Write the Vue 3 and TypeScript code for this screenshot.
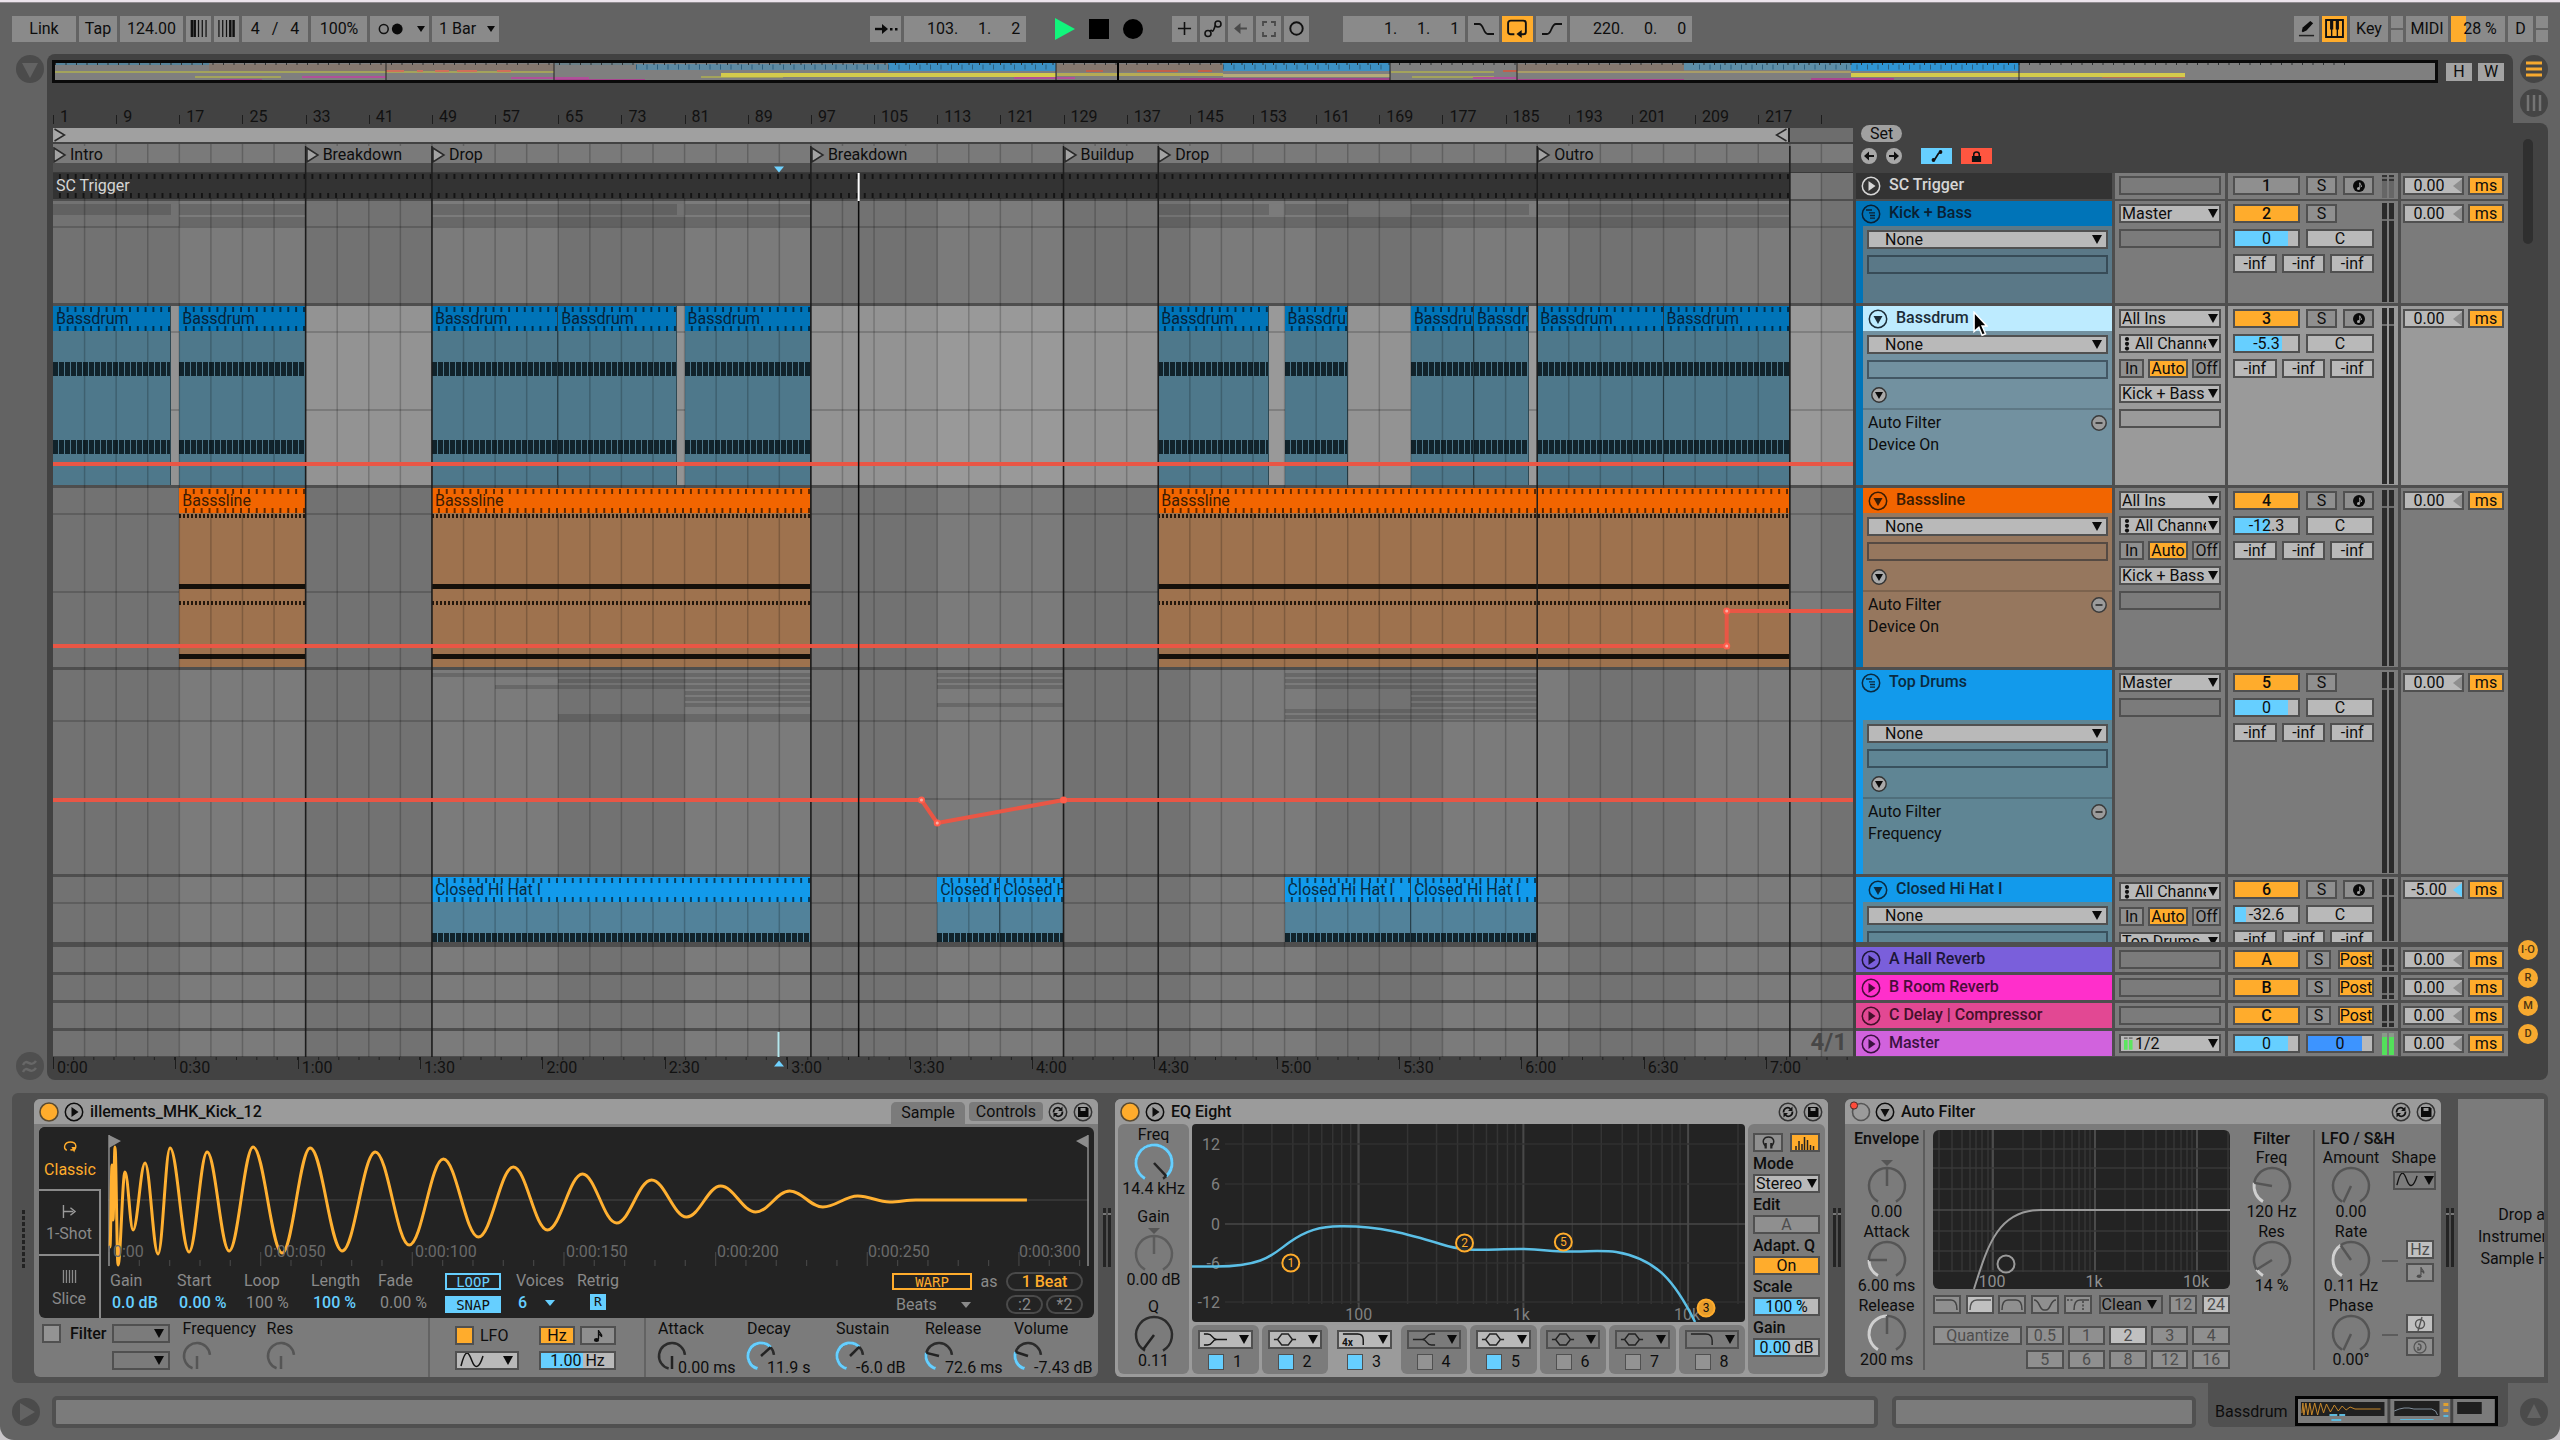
<script setup lang="ts">
import { h } from 'vue'

const BARS = 228
const pct = (bars: number): string => (bars / BARS) * 100 + '%'

/* ---------- icons ---------- */
const icons: Record<string, [string, string]> = {
  nudgeDown: ['0 0 18 18', '<path d="M2 0v18M5 0v18" stroke="#111" stroke-width="2.6"/><path d="M9 0v18M13 0v18M17 0v18" stroke="#111" stroke-width="1.3"/>'],
  nudgeUp: ['0 0 18 18', '<path d="M1 0v18M5 0v18M9 0v18" stroke="#111" stroke-width="1.3"/><path d="M13 0v18M16.5 0v18" stroke="#111" stroke-width="2.6"/>'],
  metro: ['0 0 26 12', '<circle cx="6" cy="6" r="4.6" fill="none" stroke="#111" stroke-width="1.6"/><circle cx="20" cy="6" r="5.6" fill="#0a0a0a"/>'],
  follow: ['0 0 24 12', '<path d="M1 6h9" stroke="#0a0a0a" stroke-width="2.4"/><path d="M8 1l6 5-6 5z" fill="#0a0a0a"/><path d="M16 5h2.500v2.500h-2.500zM21 5h2.500v2.500h-2.500z" fill="#0a0a0a"/>'],
  play: ['0 0 20 22', '<path d="M0 0l20 11L0 22z" fill="#12f57c"/>'],
  stop: ['0 0 20 20', '<path d="M0 0h20v20H0z" fill="#000"/>'],
  rec: ['0 0 20 20', '<circle cx="10" cy="10" r="10" fill="#000"/>'],
  plus: ['0 0 16 16', '<path d="M8 1v14M1 8h14" stroke="#111" stroke-width="1.700"/>'],
  auto: ['0 0 18 18', '<circle cx="4" cy="13.500" r="3" fill="none" stroke="#111" stroke-width="1.600"/><circle cx="14" cy="4" r="3" fill="none" stroke="#111" stroke-width="1.600"/><path d="M6 11.500C8 8 8 14 10 9s1-3 2-3.500" fill="none" stroke="#111" stroke-width="1.600"/>'],
  back: ['0 0 14 12', '<path d="M14 6H5" stroke="#4a4a4a" stroke-width="2.200"/><path d="M7 0v12L0 6z" fill="#4a4a4a"/>'],
  frame: ['0 0 14 16', '<path d="M1 5V1h4M9 1h4v4M13 11v4H9M5 15H1v-4" fill="none" stroke="#4a4a4a" stroke-width="1.800"/>'],
  ring: ['0 0 14 14', '<circle cx="7" cy="7" r="5.800" fill="none" stroke="#111" stroke-width="1.800"/>'],
  punchIn: ['0 0 22 14', '<path d="M1 2h5c5 0 4 10 9 10h6" fill="none" stroke="#111" stroke-width="1.800"/>'],
  punchOut: ['0 0 22 14', '<path d="M1 12h5c5 0 4-10 9-10h6" fill="none" stroke="#111" stroke-width="1.800"/>'],
  loop: ['0 0 22 18', '<path d="M8 14.500H4.500q-2.500 0-2.500-2.500V4q0-2.500 2.500-2.500h12q2.500 0 2.500 2.500v8q0 2.500-2.500 2.500H14" fill="none" stroke="#111" stroke-width="1.800"/><path d="M15 10.500v7.500l-5-3.700z" fill="#111"/>'],
  pen: ['0 0 18 18', '<path d="M4 12l1-4 8-7 3 2.500-7 7.500-4 2z" fill="#0a0a0a"/><path d="M1 16.500h16" stroke="#222" stroke-width="1.600"/>'],
  keys: ['0 0 18 18', '<path d="M1 1h16v16H1z" fill="none" stroke="#111" stroke-width="1.800"/><path d="M6.300 1v16M11.700 1v16" stroke="#111" stroke-width="1.300"/><path d="M4.800 1h3v9h-3zM10.200 1h3v9h-3z" fill="#111"/>'],
  lock: ['0 0 12 12', '<path d="M1 5.500h10V12H1z" fill="#111"/><path d="M3 6V3.500q0-2.500 3-2.500t3 2.500V6" fill="none" stroke="#111" stroke-width="1.700"/>'],
  link: ['0 0 12 12', '<path d="M2 10.500C6 9 5 4 10 1.500" stroke="#111" stroke-width="1.800" fill="none"/><circle cx="2.500" cy="10" r="1.900" fill="#111"/><circle cx="9.500" cy="2" r="1.900" fill="#111"/>'],
  arrowL: ['0 0 16 16', '<circle cx="8" cy="8" r="8" fill="#a8a8a8"/><path d="M13 8H6" stroke="#111" stroke-width="2"/><path d="M8 3.500v9L3 8z" fill="#111"/>'],
  arrowR: ['0 0 16 16', '<circle cx="8" cy="8" r="8" fill="#a8a8a8"/><path d="M3 8h7" stroke="#111" stroke-width="2"/><path d="M8 3.500v9L13 8z" fill="#111"/>'],
  foldR: ['0 0 20 20', '<circle cx="10" cy="10" r="8.700" fill="none" stroke="currentColor" stroke-width="1.500"/><path d="M7.500 5v10l7-5z" fill="currentColor"/>'],
  foldD: ['0 0 20 20', '<circle cx="10" cy="10" r="8.700" fill="none" stroke="currentColor" stroke-width="1.500"/><path d="M5.500 7h9L10 15z" fill="currentColor"/>'],
  group: ['0 0 20 20', '<circle cx="10" cy="10" r="8.700" fill="none" stroke="currentColor" stroke-width="1.500"/><path d="M5 6h6M8 8.800h6M9 11.500h5M9 14.200h5" stroke="currentColor" stroke-width="1.300"/>'],
  lane: ['0 0 16 16', '<circle cx="8" cy="8" r="7.200" fill="#a9a9a9" stroke="#333" stroke-width="1.400"/><path d="M4 5h8l-4 7z" fill="#0a0a0a"/>'],
  minus: ['0 0 16 16', '<circle cx="8" cy="8" r="7.200" fill="#9b9b9b" stroke="#3a3a3a" stroke-width="1.500"/><path d="M4.500 8h7" stroke="#222" stroke-width="1.500"/>'],
  note: ['0 0 12 14', '<path d="M6.500 1v9M6.500 1c0 3 4 3 3 7M6.500 4c0 2 3 2 3 4" fill="none" stroke="currentColor" stroke-width="1.300"/><ellipse cx="4.500" cy="11" rx="2.600" ry="1.900" fill="currentColor"/>'],
  arm: ['0 0 12 12', '<circle cx="6" cy="6" r="6" fill="#0a0a0a"/><path d="M6.800 2.500v5.500M6.800 3c0 1.500 2 1.500 1.600 4" stroke="#a5a5a5" stroke-width="1" fill="none"/><circle cx="5.500" cy="8.500" r="1.500" fill="#a5a5a5"/>'],
  midi: ['0 0 6 14', '<circle cx="3" cy="2" r="2.100" fill="#111"/><circle cx="3" cy="6.800" r="2.100" fill="#111"/><circle cx="3" cy="11.600" r="2.100" fill="#111"/>'],
  level: ['0 0 10 14', '<path d="M0 3h4v11H0zM5.500 3h4v11h-4z" fill="#5ce660"/><path d="M0 0h4v2H0zM5.500 0h4v2h-4z" fill="#777"/>'],
  discR: ['0 0 28 28', '<circle cx="14" cy="14" r="14" fill="#4b4b4b"/><path d="M8 5v18l15-9z" fill="#636363"/>'],
  discD: ['0 0 28 28', '<circle cx="14" cy="14" r="14" fill="#4b4b4b"/><path d="M6 8h16l-8 15z" fill="#636363"/>'],
  discU: ['0 0 28 28', '<circle cx="14" cy="14" r="14" fill="#4b4b4b"/><path d="M7 20h14L14 6z" fill="#636363"/>'],
  discW: ['0 0 28 28', '<circle cx="14" cy="14" r="14" fill="#4f4f4f"/><path d="M7 13c4-8 7 4 13-4M7 20c4-8 7 4 13-4" fill="none" stroke="#676767" stroke-width="2.500"/>'],
  discA: ['0 0 28 28', '<circle cx="14" cy="14" r="14" fill="#454545"/><path d="M6 8h16M6 14h16M6 20h16" stroke="#f7a92f" stroke-width="3"/>'],
  discS: ['0 0 28 28', '<circle cx="14" cy="14" r="14" fill="#454545"/><path d="M8 6v16M14 6v16M20 6v16" stroke="#747474" stroke-width="2.500"/>'],
  on: ['0 0 20 20', '<circle cx="10" cy="10" r="9" fill="#ffac2c" stroke="#5a4a30" stroke-width="1.600"/>'],
  off: ['0 0 20 20', '<circle cx="11" cy="10" r="8.500" fill="none" stroke="#555" stroke-width="1.600"/><circle cx="4" cy="3.500" r="3.600" fill="#ff4b3a" stroke="#4a2a28"/>'],
  swap: ['0 0 20 20', '<circle cx="10" cy="10" r="8.700" fill="none" stroke="#333" stroke-width="1.500"/><path d="M5.500 10.500c0-5 5-6 7-3.500M14.500 9.500c0 5-5 6-7 3.500" fill="none" stroke="#111" stroke-width="1.700"/><path d="M14.500 4.500v4.500h-4.500zM5.500 15.500V11h4.500z" fill="#111"/>'],
  save: ['0 0 20 20', '<circle cx="10" cy="10" r="8.700" fill="none" stroke="#333" stroke-width="1.500"/><path d="M5 5h9l1.500 1.500V15H5z" fill="#0a0a0a"/><path d="M7.500 6h5v3h-5z" fill="#999"/>'],
  classic: ['0 0 16 14', '<path d="M4 10C0 8 1 1 8 1s7 7 3 8.500H8" fill="none" stroke="#ffac2c" stroke-width="1.500"/><path d="M9 6.500h5l-2 6z" fill="#ffac2c"/><path d="M8 9.500h5" stroke="#ffac2c"/>'],
  oneShot: ['0 0 16 14', '<path d="M1.500 0v14M2 7h10" stroke="#9a9a9a" stroke-width="1.500"/><path d="M9 3l5 4-5 4" fill="none" stroke="#9a9a9a" stroke-width="1.500"/>'],
  slice: ['0 0 16 14', '<path d="M1.500 0v14M4.700 0v14M8 0v14M11.200 0v14M14.500 0v14" stroke="#8a8a8a" stroke-width="1.400"/>'],
  sine: ['0 0 24 14', '<path d="M1 12C6-8 9-1 12 7s7 8 11-5" fill="none" stroke="#111" stroke-width="1.500"/>'],
  head: ['0 0 16 16', '<path d="M5 12C0 7 3 2 8 2s8 5 3 10" fill="none" stroke="#222" stroke-width="1.600"/><path d="M5 8.500v6M11 8.500v6" stroke="#222" stroke-width="2.400"/>'],
  spectrum: ['0 0 20 14', '<path d="M1 14v-4M4 14V5M7 14V8M9.500 14V1M12.500 14V4M15.500 14V9M18.500 14v-4" stroke="#222" stroke-width="1.500"/>'],
  shelfL: ['0 0 26 14', '<path d="M1 1h4q3 0 5 3t5 3h11M1 13h4q3 0 5-3t5-3" fill="none" stroke="#111" stroke-width="1.500"/>'],
  shelfH: ['0 0 26 14', '<path d="M25 1h-4q-3 0-5 3t-5 3H1M25 13h-4q-3 0-5-3t-5-3" fill="none" stroke="#222" stroke-width="1.500"/>'],
  bell: ['0 0 26 14', '<path d="M1 7h4l4.500-6h7L21 7h4M5 7l4.500 6h7L21 7" fill="none" stroke="#222" stroke-width="1.500"/>'],
  cut4: ['0 0 26 14', '<path d="M1 1h16q6 0 6 6v6" fill="none" stroke="#111" stroke-width="1.500"/><text x="0" y="14" font-size="11" font-family="Roboto, sans-serif" font-weight="700" fill="#111">4x</text>'],
  cut: ['0 0 26 14', '<path d="M1 1h16q7 0 7 7v5" fill="none" stroke="#222" stroke-width="1.500"/>'],
  fLow: ['0 0 24 13', '<path d="M1 2h15q6 0 6 10" fill="none" stroke="#444" stroke-width="1.500"/>'],
  fHigh: ['0 0 24 13', '<path d="M2 12q0-10 7-10h14" fill="none" stroke="#555" stroke-width="1.500"/>'],
  fBand: ['0 0 24 13', '<path d="M2 12q0-10 6-10h8q6 0 6 10" fill="none" stroke="#444" stroke-width="1.500"/>'],
  fNotch: ['0 0 24 13', '<path d="M1 2c6 0 5 10 10 10h2c5 0 4-10 10-10" fill="none" stroke="#444" stroke-width="1.500"/>'],
  fMorph: ['0 0 24 13', '<path d="M8 12q0-10 6-10h9" fill="none" stroke="#444" stroke-width="1.500"/><path d="M1 2h6M17 3v10" stroke="#444" stroke-width="1.500" stroke-dasharray="2 1.500"/>'],
  phi: ['0 0 14 14', '<circle cx="7" cy="7" r="4.500" fill="none" stroke="#555" stroke-width="1.400"/><path d="M9 0L5 14" stroke="#555" stroke-width="1.400"/>'],
  spin: ['0 0 14 14', '<circle cx="7" cy="7" r="6" fill="none" stroke="#555" stroke-width="1.300"/><path d="M5 4c4 0 4 6 0 6V7" fill="none" stroke="#555" stroke-width="1.400"/>'],
}
const Icon = (p: { n: string; w: number; t?: number }) => {
  const [vb, body] = icons[p.n]
  const [, , vw, vh] = vb.split(' ').map(Number)
  return h('svg', { viewBox: vb, width: p.w, height: p.t ?? Math.round((p.w * vh) / vw), innerHTML: body, 'aria-hidden': 'true', style: 'flex:none;display:block;overflow:visible' })
}
Icon.props = ['n', 'w', 't']

/* ---------- rotary knob: angles are degrees clockwise from the top ---------- */
const Knob = (p: { r: number; a: number; from?: number; to?: number; on?: string; ring?: string; hand?: string; tri?: boolean }) => {
  const r = p.r - 1
  const c = p.r
  const from = p.from ?? -150
  const to = p.to ?? 150
  const at = (deg: number, rad = r) => {
    const t = (deg * Math.PI) / 180
    return (c + rad * Math.sin(t)).toFixed(2) + ' ' + (c - rad * Math.cos(t)).toFixed(2)
  }
  const arc = (s: number, e: number) => `M${at(s)}A${r} ${r} 0 ${e - s > 180 ? 1 : 0} 1 ${at(e)}`
  const parts = [h('path', { d: arc(from, to), fill: 'none', stroke: p.ring ?? '#2b2b2b', 'stroke-width': 2.5 })]
  if (p.on && p.a > from) parts.push(h('path', { d: arc(from, p.a), fill: 'none', stroke: p.on, 'stroke-width': 3 }))
  parts.push(h('path', { d: `M${c} ${c}L${at(p.a)}`, stroke: p.hand ?? '#222', 'stroke-width': 2.5 }))
  if (p.tri) parts.push(h('path', { d: `M${c - 6} -7h12l-6 6z`, fill: '#555' }))
  return h('svg', { viewBox: `0 0 ${c * 2} ${c * 2}`, width: c * 2, height: c * 2, 'aria-hidden': 'true', style: 'flex:none;display:block;overflow:visible' }, parts)
}
Knob.props = ['r', 'a', 'from', 'to', 'on', 'ring', 'hand', 'tri']

/* ---------- arrangement ---------- */
const rulerBars = Array.from({ length: 29 }, (_, i) => 1 + i * 8)
const times = Array.from({ length: 15 }, (_, i) => `${Math.floor(i / 2)}:${i % 2 ? '30' : '00'}`)
const locators = [
  { bar: 1, name: 'Intro' }, { bar: 33, name: 'Breakdown' }, { bar: 49, name: 'Drop' }, { bar: 97, name: 'Breakdown' },
  { bar: 129, name: 'Buildup' }, { bar: 141, name: 'Drop' }, { bar: 189, name: 'Outro' },
]
const songLines = [33, 49, 97, 129, 141, 189, 221]
const gridLines = Array.from({ length: 56 }, (_, i) => (i + 1) * 4)

type Ghost = [number, number, number, number]
interface Track {
  id: string; name: string; kind: 'plain' | 'group' | 'track'; h: number; sep: number
  color: string; body?: string; ink: string; strip?: string; num: string
  lines: number[]; clips: [number, number][]; clipBody?: string; notes?: string; ghosts?: Ghost[]
  io: string[]; ioTop?: number; solo?: boolean; arm?: boolean; post?: boolean
  vol?: string; volFill?: number; auto?: string; tall?: boolean; delay: string; sel?: boolean; inactive?: boolean
}
const tracks: Track[] = [
  { id: 'sc', name: 'SC Trigger', kind: 'plain', h: 28, sep: 2, color: '#333333', ink: '#d6d6d6', num: '1', lines: [], clips: [[1, 221]], io: ['box'], solo: true, arm: true, delay: '0.00', inactive: true },
  {
    id: 'kb', name: 'Kick + Bass', kind: 'group', h: 105, sep: 3, color: '#0074b8', body: '#5a7887', ink: '#0a2033', strip: '#0074b8', num: '2', lines: [25], clips: [],
    ghosts: [[1, 16, 3, 11], [17, 33, 3, 11], [17, 33, 16, 9], [49, 80, 3, 11], [81, 97, 3, 11], [49, 97, 16, 9], [141, 155, 3, 11], [157, 165, 3, 11], [173, 188, 3, 11], [189, 221, 3, 11], [141, 221, 16, 9]],
    io: ['Master', 'box'], solo: true, vol: '0', volFill: 84, delay: '0.00',
  },
  {
    id: 'bd', name: 'Bassdrum', kind: 'track', h: 182, sep: 3, color: '#bdebff', body: '#7291a0', ink: '#1c2c38', strip: '#0074b8', num: '3', lines: [25, 103],
    clips: [[1, 16], [17, 33], [49, 65], [65, 80], [81, 97], [141, 155], [157, 165], [173, 181], [181, 188], [189, 205], [205, 221]], clipBody: '#4e788b', notes: 'kick',
    io: ['All Ins', 'chan', 'mon', 'Kick + Bass', 'box'], solo: true, arm: true, vol: '-5.3', volFill: 74, auto: 'Device On', delay: '0.00', sel: true,
  },
  {
    id: 'bl', name: 'Basssline', kind: 'track', h: 182, sep: 3, color: '#f26500', body: '#96775e', ink: '#3a1c05', strip: '#0074b8', num: '4', lines: [25, 103],
    clips: [[17, 33], [49, 97], [141, 221]], clipBody: '#9e724e', notes: 'bass',
    io: ['All Ins', 'chan', 'mon', 'Kick + Bass', 'box'], solo: true, arm: true, vol: '-12.3', volFill: 54, auto: 'Device On', delay: '0.00',
  },
  {
    id: 'td', name: 'Top Drums', kind: 'group', h: 207, sep: 3, color: '#129aeb', body: '#5f8594', ink: '#0a2a40', strip: '#129aeb', num: '5', lines: [50, 128], clips: [],
    ghosts: [
      [49, 97, 3, 4], [65, 97, 9, 4], [57, 97, 15, 4], [81, 97, 21, 4], [81, 97, 27, 4], [81, 97, 33, 4], [65, 97, 44, 6],
      [113, 129, 3, 4], [113, 129, 9, 4], [113, 129, 15, 4], [113, 129, 33, 4],
      [157, 189, 3, 4], [157, 189, 9, 4], [157, 189, 15, 4], [173, 189, 21, 4], [173, 189, 27, 4], [173, 189, 33, 4], [157, 189, 39, 4], [157, 189, 45, 4],
    ],
    io: ['Master', 'box'], solo: true, vol: '0', volFill: 84, auto: 'Frequency', tall: true, delay: '0.00',
  },
  {
    id: 'hh', name: 'Closed Hi Hat I', kind: 'track', h: 70, sep: 5, color: '#129aeb', body: '#5f8594', ink: '#0a2a40', strip: '#129aeb', num: '6', lines: [25],
    clips: [[49, 97], [113, 121], [121, 129], [157, 173], [173, 189]], clipBody: '#52829a', notes: 'hat',
    io: ['chan', 'mon', 'Top Drums'], ioTop: 5, solo: true, arm: true, vol: '-32.6', volFill: 18, delay: '-5.00',
  },
  { id: 'ra', name: 'A Hall Reverb', kind: 'plain', h: 28, sep: 3, color: '#7a5fdb', ink: '#1d1638', num: 'A', lines: [], clips: [], io: ['box'], solo: true, post: true, delay: '0.00' },
  { id: 'rb', name: 'B Room Reverb', kind: 'plain', h: 28, sep: 3, color: '#ff2fcb', ink: '#4a0c3a', num: 'B', lines: [], clips: [], io: ['box'], solo: true, post: true, delay: '0.00' },
  { id: 'rc', name: 'C Delay | Compressor', kind: 'plain', h: 28, sep: 3, color: '#e24893', ink: '#45102a', num: 'C', lines: [], clips: [], io: ['box'], solo: true, post: true, delay: '0.00' },
  { id: 'ms', name: 'Master', kind: 'plain', h: 26, sep: 1, color: '#d162dd', ink: '#3a1240', num: '', lines: [], clips: [], io: ['out'], delay: '0.00' },
]
const isSelect = (k: string): boolean => !['box', 'chan', 'mon', 'out'].includes(k)
const clipColor = (t: Track): string => (t.id === 'bd' ? '#0074b8' : t.color)

/* ---------- overview ---------- */
const overview: [number, number, number, number, string][] = [
  [56, 210, 0, 2, '#56839a'], [556, 636, 0, 2, '#6a7f88'], [637, 888, 1, 6, '#5d8aa3'], [889, 1057, 0, 8, '#3c90c4'], [1224, 1391, 0, 8, '#3c90c4'],
  [1685, 1852, 0, 7, '#5d8ea8'], [1852, 2020, 0, 8, '#2f95d4'], [210, 555, 1, 8, '#85786f'], [1057, 1224, 1, 8, '#85786f'], [1518, 1685, 1, 8, '#85786f'],
  [56, 555, 8, 2, '#a3a35c'], [196, 282, 13, 2, '#a3a35c'], [702, 784, 13, 2, '#a3a35c'], [722, 1057, 10, 4, '#d4cb4c'], [1058, 1224, 10, 3, '#b5ab55'],
  [1224, 1391, 11, 3, '#b5ab7a'], [1392, 1495, 8, 2, '#a3a35c'], [1413, 1495, 13, 2, '#a3a35c'], [1518, 1852, 8, 2, '#a89c68'], [1852, 2186, 10, 4, '#d4cb4c'],
  [303, 387, 13, 2, '#b0509a'], [221, 263, 16, 2, '#a8458f'], [512, 590, 14, 2, '#b0509a'], [556, 646, 16, 2, '#a8458f'], [1015, 1076, 14, 2, '#b0509a'],
  [1181, 1391, 15, 3, '#a0458a'], [1474, 1518, 14, 2, '#b0509a'], [1518, 1685, 16, 2, '#a8458f'], [1812, 1895, 15, 2, '#a8458f'],
  [387, 405, 7, 2, '#d0705a'], [418, 424, 7, 2, '#d0705a'], [436, 450, 7, 2, '#d0705a'], [458, 478, 7, 2, '#d0705a'], [498, 512, 7, 2, '#d0705a'],
  [1087, 1104, 7, 2, '#c0604a'], [1138, 1179, 7, 2, '#c0604a'], [1199, 1213, 7, 2, '#c0604a'], [1504, 1518, 7, 2, '#c0604a'], [2103, 2186, 14, 1, '#b8705a'],
]
const overviewLines = [387, 555, 1057, 1391, 1518, 2020]

/* ---------- sample waveform ---------- */
const extrema: [number, number][] = [
  [2, 117], [4, 35], [5, 90], [7, 17], [10, 135], [17, 42], [25, 100], [37, 33], [50, 124], [62, 18], [81, 122], [99, 22], [121, 121], [145, 17], [174, 123],
  [202, 18], [234, 121], [267, 22], [301, 115], [335, 29], [370, 107], [405, 37], [439, 100], [474, 44], [508, 93], [543, 50], [578, 87],
  [612, 56], [647, 82], [681, 61], [714, 77], [749, 66], [781, 72], [807, 70], [918, 70],
]
const wavePath = extrema.reduce((d, [x, y], i) => {
  if (!i) return `M${x} ${y}`
  const [px, py] = extrema[i - 1]
  const k = (x - px) * 0.37
  return d + `C${px + k} ${py} ${x - k} ${y} ${x} ${y}`
}, '')
const waveTimes = ['0:00', '0:00:050', '0:00:100', '0:00:150', '0:00:200', '0:00:250', '0:00:300']
const waveTicks = Array.from({ length: 33 }, (_, i) => i * 30.3)
const sampleParams = [
  { l: 'Gain', v: '0.0 dB', on: true }, { l: 'Start', v: '0.00 %', on: true }, { l: 'Loop', v: '100 %', on: false },
  { l: 'Length', v: '100 %', on: true }, { l: 'Fade', v: '0.00 %', on: false },
]
const envelope = [
  { l: 'Attack', v: '0.00 ms', a: 180, on: '' }, { l: 'Decay', v: '11.9 s', a: 48, on: '#66cfff' }, { l: 'Sustain', v: '-6.0 dB', a: 45, on: '#66cfff' },
  { l: 'Release', v: '72.6 ms', a: -76, on: '#66cfff' }, { l: 'Volume', v: '-7.43 dB', a: -72, on: '#66cfff' },
]

/* ---------- filters ---------- */
const logLines = (left: number, decade: number, first: number, max: number): number[] => {
  const out: number[] = []
  for (let d = 0; d < 4; d++) for (let n = 1; n < 10; n++) {
    const x = left + decade * (d + Math.log10(n)) + first
    if (x > 2 && x < max) out.push(Math.round(x))
  }
  return out
}
const eqGrid = logLines(0, 165.3, 1, 552)
const afGrid = logLines(-43, 102.3, 0, 296)
const eqDb = [{ l: '12', y: 20 }, { l: '6', y: 60 }, { l: '0', y: 100 }, { l: '-6', y: 139 }, { l: '-12', y: 178 }]
const eqNodes = [{ n: '1', x: 99, y: 139 }, { n: '2', x: 273, y: 119 }, { n: '5', x: 372, y: 118 }, { n: '3', x: 515, y: 184, on: true }]
const bands = [
  { n: 1, i: 'shelfL', on: true }, { n: 2, i: 'bell', on: true }, { n: 3, i: 'cut4', on: true, cur: true }, { n: 4, i: 'shelfH', on: false },
  { n: 5, i: 'bell', on: true }, { n: 6, i: 'bell', on: false }, { n: 7, i: 'bell', on: false }, { n: 8, i: 'cut', on: false },
]
const envCol = [{ l: '', v: '0.00', a: 0, tri: true, on: '' }, { l: 'Attack', v: '6.00 ms', a: -90, on: '#cfcfcf' }, { l: 'Release', v: '200 ms', a: 0, on: '#cfcfcf' }]
const filCol = [{ l: 'Freq', v: '120 Hz', a: -80, on: '#cfcfcf' }, { l: 'Res', v: '14 %', a: -122, on: '#cfcfcf' }]
const lfoCol = [{ l: 'Amount', v: '0.00', a: -155, on: '' }, { l: 'Rate', v: '0.11 Hz', a: -35, on: '#cfcfcf' }, { l: 'Phase', v: '0.00°', a: -155, on: '' }]
const shapes = ['fLow', 'fHigh', 'fBand', 'fNotch', 'fMorph']
const beatsA = ['0.5', '1', '2', '3', '4']
const beatsB = ['5', '6', '8', '12', '16']
</script>

<template>
  <div class="app">
    <div class="edge"></div>
    <header class="bar">
      <div class="grp">
        <button class="tb" style="width: 64px">Link</button>
        <button class="tb" style="width: 38px">Tap</button>
        <input class="tb" style="width: 63px" aria-label="Tempo" value="124.00" />
        <button class="tb n25" aria-label="Nudge down"><Icon n="nudgeDown" :w="17" /></button>
        <button class="tb n25" aria-label="Nudge up"><Icon n="nudgeUp" :w="17" /></button>
        <input class="tb" style="width: 66px" aria-label="Time signature" value="4   /   4" />
        <input class="tb" style="width: 56px" aria-label="Groove amount" value="100%" />
        <button class="tb drop" style="width: 59px" aria-label="Metronome"><Icon n="metro" :w="25" /></button>
        <span class="sel flat" style="width: 67px"><select aria-label="Quantization"><option>1 Bar</option></select></span>
      </div>
      <div class="space-l"></div>
      <div class="grp">
        <button class="tb n31" aria-label="Follow"><Icon n="follow" :w="24" /></button>
        <input class="tb pos" aria-label="Arrangement position" value="103.     1.     2" />
        <div class="trans">
          <button aria-label="Play"><Icon n="play" :w="20" /></button>
          <button aria-label="Stop"><Icon n="stop" :w="20" /></button>
          <button aria-label="Record"><Icon n="rec" :w="20" /></button>
        </div>
        <button class="tb n25" aria-label="Overdub"><Icon n="plus" :w="15" /></button>
        <button class="tb n25" aria-label="Automation arm"><Icon n="auto" :w="18" /></button>
        <button class="tb n25" aria-label="Re-enable automation"><Icon n="back" :w="13" /></button>
        <button class="tb n25" aria-label="Capture"><Icon n="frame" :w="14" /></button>
        <button class="tb n25" aria-label="Session record"><Icon n="ring" :w="15" /></button>
        <input class="tb pos far" aria-label="Loop start" value="1.     1.     1" />
        <button class="tb n31" aria-label="Punch in"><Icon n="punchIn" :w="22" /></button>
        <button class="tb n31 lit" aria-label="Loop"><Icon n="loop" :w="23" /></button>
        <button class="tb n31" aria-label="Punch out"><Icon n="punchOut" :w="22" /></button>
        <input class="tb pos" aria-label="Loop length" value="220.     0.     0" />
      </div>
      <div class="space-r"></div>
      <div class="grp">
        <button class="tb n25" aria-label="Draw mode"><Icon n="pen" :w="17" /></button>
        <button class="tb n25 lit" aria-label="Computer keyboard"><Icon n="keys" :w="19" /></button>
        <button class="tb" style="width: 38px">Key</button>
        <span class="io"><i></i><i></i></span>
        <button class="tb" style="width: 42px">MIDI</button>
        <span class="tb cpu">28 %</span>
        <button class="tb n25">D</button>
        <span class="io"><i></i><i></i></span>
      </div>
    </header>

    <main class="work">
      <div class="gutter">
        <button aria-label="Show browser"><Icon n="discD" :w="28" /></button>
        <button aria-label="Groove pool"><Icon n="discW" :w="28" /></button>
      </div>
      <section class="panel">
        <div class="over">
          <div class="map">
            <svg viewBox="56 0 2380 17" preserveAspectRatio="none" aria-hidden="true">
              <rect v-for="(o, i) in overview" :key="i" :x="o[0]" :y="o[2]" :width="o[1] - o[0]" :height="o[3]" :fill="o[4]" />
              <path d="M56 1H2352" stroke="#2b2f31" stroke-width="2" stroke-dasharray="1 9.500" />
              <path d="M637 4H1057M1224 4H1391M1700 4H2020" stroke="#2d5f7e" stroke-width="5" stroke-dasharray="1 9.500" />
              <path v-for="x in overviewLines" :key="x" :d="`M${x} 0V17`" stroke="#222" stroke-width="1" />
              <path d="M1119 0V17" stroke="#000" stroke-width="2" />
            </svg>
          </div>
          <button class="hw">H</button>
          <button class="hw">W</button>
        </div>

        <div class="split">
          <div class="tl">
            <div class="ruler">
              <span v-for="b in rulerBars" :key="b" :style="{ flexBasis: pct(8) }">{{ b < 220 ? b : '' }}</span>
            </div>
            <div class="loopbar">
              <div class="brace" :style="{ width: pct(220) }">
                <svg viewBox="0 0 12 14" width="13" height="14"><path d="M1 1l10 6-10 6" fill="#a8a8a8" stroke="#2a2a2a" stroke-width="1.500" /></svg>
                <svg viewBox="0 0 12 14" width="13" height="14"><path d="M11 1L1 7l10 6" fill="#a8a8a8" stroke="#2a2a2a" stroke-width="1.500" /></svg>
              </div>
            </div>
            <div class="canvas">
              <div class="marks">
                <span v-for="m in locators" :key="m.bar" class="mark" :style="{ left: pct(m.bar - 1) }">
                  <svg viewBox="0 0 14 16" width="14" height="16"><path d="M1 1l11 7-11 7z" fill="#a3a3a3" stroke="#2a2a2a" stroke-width="1.500" /></svg>{{ m.name }}
                </span>
              </div>
              <div class="scrub"><svg class="flag" viewBox="0 0 10 6" width="10" height="7" :style="{ left: pct(91.9) }"><path d="M0 0h10L5 6z" fill="#6fd2ff" /></svg></div>
              <div v-for="t in tracks" :key="t.id" class="lane" :class="[t.id, { picked: t.sel }]" :style="{ height: t.h + 'px', borderBottomWidth: t.sep + 'px' }">
                <i v-for="(g, i) in t.ghosts" :key="'g' + i" class="ghost" :style="{ left: pct(g[0] - 1), width: pct(g[1] - g[0]), top: g[2] + 'px', height: g[3] + 'px' }"></i>
                <i v-for="y in t.lines" :key="'l' + y" class="hair" :style="{ top: y + 'px' }"></i>
                <div v-for="(c, i) in t.clips" :key="'c' + i" class="clip" :class="t.notes" :style="{ left: pct(c[0] - 1), width: pct(c[1] - c[0]), backgroundColor: t.clipBody ?? t.color }">
                  <div class="cap" :style="{ backgroundColor: clipColor(t), color: t.id === 'bd' ? '#082238' : t.ink, backgroundSize: 100 / (c[1] - c[0]) + '% 5px' }">{{ t.name }}</div>
                </div>
              </div>
              <svg class="grid" viewBox="0 0 228 913" preserveAspectRatio="none" aria-hidden="true">
                <path v-for="x in gridLines" :key="x" :d="`M${x} 0V913`" />
              </svg>
              <svg class="over-lines" viewBox="0 0 228 913" preserveAspectRatio="none" aria-hidden="true">
                <path v-for="x in songLines" :key="x" :d="`M${x - 1} 2V913`" stroke="#1c1c1c" stroke-width="1.500" />
                <g stroke="#e95645" stroke-width="4" fill="none">
                  <path d="M0 320H228" />
                  <path d="M0 502H212V467H228" />
                  <path d="M0 656H110L112 679L128 656H228" />
                </g>
                <g stroke="#ff5d4b" stroke-width="7" stroke-linecap="round">
                  <path d="M212 502h.01M212 467h.01M110 656h.01M112 679h.01M128 656h.01" />
                </g>
                <g stroke="#f7b0a6" stroke-width="3" stroke-linecap="round">
                  <path d="M212 502h.01M212 467h.01M110 656h.01M112 679h.01" />
                </g>
                <path d="M102.050 29V57" stroke="#fff" stroke-width="2" />
                <path d="M102.050 57V913" stroke="#0a0a0a" stroke-width="1.500" />
                <path d="M91.900 888V913" stroke="#b5e8ee" stroke-width="2" />
              </svg>
              <strong class="frac">4/1</strong>
            </div>
            <div class="times">
              <svg class="flag" viewBox="0 0 10 6" width="10" height="7" :style="{ left: pct(91.9) }"><path d="M0 6h10L5 0z" fill="#6fd2ff" /></svg>
              <span v-for="t in times" :key="t" :style="{ flexBasis: pct(15.5) }">{{ t }}</span>
            </div>
          </div>

          <div class="mix">
            <div class="tools">
              <button class="set">Set</button>
              <div class="tools-row">
                <button aria-label="Previous locator"><Icon n="arrowL" :w="16" /></button>
                <button aria-label="Next locator"><Icon n="arrowR" :w="16" /></button>
                <button class="chip blue" aria-label="Automation mode"><Icon n="link" :w="12" /></button>
                <button class="chip red" aria-label="Lock envelopes"><Icon n="lock" :w="11" /></button>
              </div>
            </div>
            <div v-for="t in tracks" :key="t.id" class="row" :class="{ picked: t.sel }" :style="{ height: t.h + 'px', borderBottomWidth: t.sep + 'px' }">
              <div class="hd" :class="t.kind" :style="{ backgroundColor: t.strip ?? t.color }">
                <div class="title" :class="{ tall: t.tall }" :style="{ backgroundColor: t.color, color: t.ink }">
                  <Icon :n="t.kind === 'group' ? 'group' : t.kind === 'track' ? 'foldD' : 'foldR'" :w="20" />
                  <b>{{ t.name }}</b>
                  <svg v-if="t.sel" class="cursor" viewBox="0 0 14 24" width="15" height="26"><path d="M1 1v18l4.500-4 3 7.500 3.200-1.400-3.200-7.300H13z" fill="#000" stroke="#fff" stroke-width="1.400" /></svg>
                </div>
                <div v-if="t.body" class="body" :style="{ backgroundColor: t.body }">
                  <span class="sel none"><select :aria-label="t.name + ' device'"><option>None</option></select></span>
                  <span class="slot"></span>
                  <template v-if="t.auto">
                    <button class="lanebtn" aria-label="Add lane"><Icon n="lane" :w="16" /></button>
                    <div class="autos">
                      <div><span>Auto Filter</span><button aria-label="Hide lane"><Icon n="minus" :w="16" /></button></div>
                      <div>{{ t.auto }}</div>
                    </div>
                  </template>
                </div>
              </div>

              <div class="cell ios" :style="{ paddingTop: (t.ioTop ?? 3) + 'px' }">
                <template v-for="(k, i) in t.io" :key="i">
                  <span v-if="k === 'box'" class="slot"></span>
                  <span v-else-if="k === 'chan'" class="sel pre"><Icon class="pi" n="midi" :w="6" /><select :aria-label="t.name + ' channel'"><option>All Channels</option></select></span>
                  <span v-else-if="k === 'out'" class="sel pre"><Icon class="pi" n="level" :w="9" /><select aria-label="Master output"><option>1/2</option></select></span>
                  <span v-else-if="k === 'mon'" class="mon"><button class="b">In</button><button class="b lit">Auto</button><button class="b">Off</button></span>
                  <span v-else-if="isSelect(k)" class="sel"><select :aria-label="t.name + ' routing ' + i"><option>{{ k }}</option></select></span>
                </template>
              </div>

              <div class="cell mx">
                <div v-if="t.id !== 'ms'" class="ln">
                  <button class="b w67 num" :class="{ lit: !t.inactive }">{{ t.num }}</button>
                  <button v-if="t.solo" class="b" :class="t.post ? 'w25' : 'w31'">S</button>
                  <button v-if="t.arm" class="b w31" aria-label="Arm"><Icon n="arm" :w="12" /></button>
                  <button v-if="t.post" class="b lit w36">Post</button>
                </div>
                <div v-else class="ln">
                  <input class="v w67" aria-label="Master volume" value="0" :style="{ backgroundImage: 'linear-gradient(90deg,#66cfff 84%,transparent 0)' }" />
                  <input class="v w68" aria-label="Cue volume" value="0" :style="{ backgroundImage: 'linear-gradient(90deg,#3d94ff 84%,transparent 0)' }" />
                </div>
                <div v-if="t.vol" class="ln">
                  <input class="v w67" :aria-label="t.name + ' volume'" :value="t.vol" :style="{ backgroundImage: `linear-gradient(90deg,#66cfff ${t.volFill}%,transparent 0)` }" />
                  <input class="v w68" :aria-label="t.name + ' pan'" value="C" />
                </div>
                <div v-if="t.vol" class="ln inf">
                  <input v-for="n in 3" :key="n" class="v" :aria-label="t.name + ' send ' + n" value="-inf" />
                </div>
                <div class="meter" :class="{ live: t.id === 'ms', dim: t.inactive }"><i></i><i></i></div>
              </div>

              <div class="cell dl">
                <span class="dwrap" :class="{ neg: t.delay !== '0.00' }"><input class="v" :aria-label="t.name + ' delay'" :value="t.delay" /></span>
                <button class="b lit">ms</button>
              </div>
            </div>
          </div>
        </div>
      </section>
      <div class="rail">
        <div class="views">
          <button aria-label="Arrangement view"><Icon n="discA" :w="28" /></button>
          <button aria-label="Session view"><Icon n="discS" :w="28" /></button>
        </div>
        <div class="track-rail">
          <div class="thumb"></div>
          <div class="dots"><button>I·O</button><button>R</button><button>M</button><button>D</button></div>
        </div>
      </div>
    </main>

    <section class="devices">
      <div class="grip"></div>

      <article class="dev simpler">
        <div class="dt">
          <Icon n="on" :w="20" /><Icon n="foldR" :w="20" /><b>illements_MHK_Kick_12</b>
          <div class="tabs"><button>Sample</button><button>Controls</button></div>
          <Icon n="swap" :w="20" /><Icon n="save" :w="20" />
        </div>
        <div class="screen">
          <nav class="modes">
            <button class="cur"><Icon n="classic" :w="15" />Classic</button>
            <button><Icon n="oneShot" :w="15" />1-Shot</button>
            <button><Icon n="slice" :w="15" />Slice</button>
          </nav>
          <div class="wave">
            <div class="plot">
              <svg viewBox="0 0 980 137" preserveAspectRatio="none" aria-hidden="true">
                <path d="M0 70H980" stroke="#3c3c3c" stroke-width="1.500" />
                <path v-for="(x, i) in waveTicks" :key="i" :d="`M${x + 1} ${i % 5 ? 130 : 122}V136`" stroke="#444" stroke-width="1.200" />
                <path d="M1 5V136M979 5V136" stroke="#8c8c8c" stroke-width="1.500" />
                <path d="M1 5l12 6-12 7zM979 5l-12 6 12 7z" fill="#8c8c8c" />
                <path :d="wavePath" fill="none" stroke="#ffb031" stroke-width="3" vector-effect="non-scaling-stroke" />
              </svg>
              <div class="wt"><span v-for="w in waveTimes" :key="w">{{ w }}</span></div>
            </div>
            <div class="sp-row">
              <div v-for="s in sampleParams" :key="s.l" class="spar"><span>{{ s.l }}</span><span :class="s.on ? 'cy' : ''">{{ s.v }}</span></div>
              <div class="ls"><button>LOOP</button><button class="fill">SNAP</button></div>
              <div class="spar voices"><span>Voices</span><span class="cy">6 <i class="dn"></i></span></div>
              <div class="spar"><span>Retrig</span><button class="retrig">R</button></div>
              <div class="warp">
                <button class="wbtn">WARP</button><span>as</span><button class="pill beat">1 Beat</button>
                <span class="beats">Beats <i class="dn g"></i></span><button class="pill">:2</button><button class="pill">*2</button>
              </div>
            </div>
          </div>
        </div>
        <div class="low">
          <div class="low-a">
            <input id="filt" type="checkbox" class="ck" /><label for="filt"><b>Filter</b></label>
            <div class="two"><span class="sel dark"><select aria-label="Filter type"><option></option></select></span><span class="sel dark"><select aria-label="Filter circuit"><option></option></select></span></div>
            <div class="kn"><span>Frequency</span><Knob :r="14" :a="180" :from="-160" :to="85" ring="#555" hand="#555" /></div>
            <div class="kn"><span>Res</span><Knob :r="14" :a="180" :from="-160" :to="85" ring="#555" hand="#555" /></div>
          </div>
          <div class="low-b">
            <div class="lr"><input id="lfo" type="checkbox" checked class="ck" /><label for="lfo">LFO</label><button class="b lit w36">Hz</button><button class="b w36" aria-label="Sync"><Icon n="note" :w="12" /></button></div>
            <div class="lr"><span class="sel wv"><Icon class="pi" n="sine" :w="24" /><select aria-label="LFO shape"><option></option></select></span><input class="v rate" aria-label="LFO rate" value="1.00 Hz" /></div>
          </div>
          <div class="low-c">
            <div v-for="e in envelope" :key="e.l" class="ek"><span>{{ e.l }}</span><div><Knob :r="14" :a="e.a" :from="-165" :to="85" :on="e.on" /><em>{{ e.v }}</em></div></div>
          </div>
        </div>
      </article>

      <div class="vm"><i></i><i></i></div>

      <article class="dev eq">
        <div class="dt"><Icon n="on" :w="20" /><Icon n="foldR" :w="20" /><b>EQ Eight</b><span class="grow"></span><Icon n="swap" :w="20" /><Icon n="save" :w="20" /></div>
        <div class="eqb">
          <div class="eql">
            <div class="kc"><span>Freq</span><Knob :r="19" :a="137" on="#66cfff" /><span>14.4 kHz</span></div>
            <div class="kc gap"><span>Gain</span><Knob :r="19" :a="0" ring="#5c5c5c" hand="#5c5c5c" :tri="true" /><span>0.00 dB</span></div>
            <div class="kc"><span>Q</span><Knob :r="19" :a="-143" /><span>0.11</span></div>
          </div>
          <div class="eqm">
            <svg class="eqs" viewBox="0 0 554 198" preserveAspectRatio="none" font-family="Roboto, sans-serif" font-size="16">
              <path v-for="x in eqGrid" :key="x" :d="`M${x} 0V180`" stroke="#343434" stroke-width="1.500" />
              <path d="M167 0V184M332 0V184M497 0V184" stroke="#484848" stroke-width="2" />
              <g v-for="d in eqDb" :key="d.l"><path :d="`M33 ${d.y}H554`" :stroke="d.l === '0' ? '#484848' : '#303030'" stroke-width="1.500" /><text x="28" :y="d.y + 6" text-anchor="end" fill="#808080">{{ d.l }}</text></g>
              <text x="167" y="196" text-anchor="middle" fill="#808080">100</text><text x="330" y="196" text-anchor="middle" fill="#808080">1k</text><text x="496" y="196" text-anchor="middle" fill="#808080">10k</text>
              <path d="M0 142.500H24C74 142.500 82 129 98 118S128 102 150 102.300C188 102 216 110 249 120C276 129 295 125 329 125C355 125 350 127.500 371 127.500C400 127.500 412 126 425 128C466 135 484 158 504 198" fill="none" stroke="#5bbfe6" stroke-width="2.500" />
              <g v-for="n in eqNodes" :key="n.n"><circle :cx="n.x" :cy="n.y" r="8.500" :fill="n.on ? '#ffac2c' : '#232323'" fill-opacity=".9" stroke="#ffac2c" stroke-width="2" /><text :x="n.x" :y="n.y + 4" font-size="12" text-anchor="middle" :fill="n.on ? '#111' : '#ffac2c'">{{ n.n }}</text></g>
            </svg>
            <div class="bands">
              <div v-for="b in bands" :key="b.n" class="band" :class="{ cur: b.cur, off: !b.on }">
                <span class="sel"><Icon class="pi" :n="b.i" :w="24" /><select :aria-label="'Band ' + b.n + ' type'"><option></option></select></span>
                <label><input type="checkbox" class="ck sm" :checked="b.on" />{{ b.n }}</label>
              </div>
            </div>
          </div>
          <div class="eqr">
            <div class="pair"><button class="b" aria-label="Audition"><Icon n="head" :w="15" /></button><button class="b lit" aria-label="Analyze"><Icon n="spectrum" :w="20" /></button></div>
            <label for="mode">Mode</label><span class="sel"><select id="mode"><option>Stereo</option></select></span>
            <span>Edit</span><button class="b dis">A</button>
            <span>Adapt. Q</span><button class="b lit">On</button>
            <label for="scale">Scale</label><input id="scale" class="v scale" value="100 %" />
            <label for="gain">Gain</label><input id="gain" class="v gain" value="0.00 dB" />
          </div>
        </div>
      </article>

      <div class="vm"><i></i><i></i></div>

      <article class="dev af">
        <div class="dt"><Icon n="off" :w="20" /><Icon n="foldD" :w="20" /><b>Auto Filter</b><span class="grow"></span><Icon n="swap" :w="20" /><Icon n="save" :w="20" /></div>
        <div class="afb">
          <div class="col env">
            <b>Envelope</b>
            <div v-for="k in envCol" :key="k.v" class="kc"><span>{{ k.l }}</span><Knob :r="19" :a="k.a" :on="k.on" ring="#555" hand="#555" :tri="k.tri" /><span>{{ k.v }}</span></div>
          </div>
          <div class="afm">
            <svg viewBox="0 0 297 159" width="297" height="159" font-family="Roboto, sans-serif" font-size="16">
              <path v-for="x in afGrid" :key="x" :d="`M${x} 0V142`" stroke="#383838" stroke-width="1.300" />
              <path d="M60 0V142M162 0V142M264 0V142" stroke="#505050" stroke-width="1.700" />
              <path d="M0 19H297M0 38H297M0 59H297M0 101H297M0 121H297M0 141H297" stroke="#383838" stroke-width="1.300" />
              <path d="M0 80H297" stroke="#4a4a4a" stroke-width="1.500" />
              <text x="59" y="157" text-anchor="middle" fill="#909090">100</text><text x="161" y="157" text-anchor="middle" fill="#909090">1k</text><text x="263" y="157" text-anchor="middle" fill="#909090">10k</text>
              <path d="M41 159C54 118 64 80 108 80H297" fill="none" stroke="#9a9a9a" stroke-width="2" />
              <circle cx="73" cy="134" r="8.500" fill="none" stroke="#9a9a9a" stroke-width="2" />
            </svg>
            <div class="fr">
              <button v-for="s in shapes" :key="s" class="b w28" :class="{ pale: s === 'fHigh' }" :aria-label="s.slice(1) + ' filter'"><Icon :n="s" :w="24" :t="13" /></button>
              <span class="sel clean"><select aria-label="Circuit"><option>Clean</option></select></span>
              <button class="b w28 dis">12</button><button class="b w28 dis pale">24</button>
            </div>
            <div class="qt">
              <button class="b q dis">Quantize</button><button v-for="b in beatsA" :key="b" class="b dis" :class="{ pale: b === '2' }">{{ b }}</button>
              <span></span><button v-for="b in beatsB" :key="b" class="b dis">{{ b }}</button>
            </div>
          </div>
          <div class="col fil">
            <b>Filter</b>
            <div v-for="k in filCol" :key="k.v" class="kc"><span>{{ k.l }}</span><Knob :r="19" :a="k.a" :on="k.on" ring="#555" hand="#555" /><span>{{ k.v }}</span></div>
          </div>
          <div class="lfo">
            <b>LFO / S&amp;H</b>
            <div class="lg">
              <div class="col">
                <div v-for="k in lfoCol" :key="k.l" class="kc"><span>{{ k.l }}</span><Knob :r="19" :a="k.a" :on="k.on" ring="#555" hand="#555" /><span>{{ k.v }}</span></div>
              </div>
              <div class="side">
                <div class="shape"><span>Shape</span><span class="sel dark"><Icon class="pi" n="sine" :w="22" /><select aria-label="LFO waveform"><option></option></select></span></div>
                <div class="opt"><i></i><div><button class="b pale dis">Hz</button><button class="b dis" aria-label="Beat sync"><Icon n="note" :w="11" /></button></div></div>
                <div class="opt"><i></i><div><button class="b pale" aria-label="Phase"><Icon n="phi" :w="14" /></button><button class="b" aria-label="Spin"><Icon n="spin" :w="14" /></button></div></div>
              </div>
            </div>
          </div>
        </div>
      </article>

      <div class="vm"><i></i><i></i></div>
      <div class="dropzone"><p>Drop an<br />Instrument or<br />Sample Here</p></div>
    </section>

    <footer class="foot">
      <button aria-label="Info view"><Icon n="discR" :w="28" /></button>
      <div class="fbox one"></div>
      <div class="fbox two2"></div>
      <div class="sel-dev">
        <span>Bassdrum</span>
        <svg viewBox="0 0 200 24" preserveAspectRatio="none" aria-hidden="true">
          <path d="M0 0h200v24H0z" fill="#7b7b7b" /><path d="M3 3h85v14H3zM98 2h46v15H98zM162 3h25v12h-25z" fill="#202020" />
          <path d="M4 14l1-10 1 12 2-12 2 12 2-12 2 12 3-12 3 12 3-12 3 10 3-9 4 8 4-7 4 6 4-5 4 4 4-3 5 2h26" fill="none" stroke="#c98a2c" stroke-width="1" />
          <path d="M98 12q10-5 20-2h18q5 1 6 6" fill="none" stroke="#9ab" stroke-width=".8" />
          <path d="M32 15h8v2h-8zM42 15h6v2h-6zM34 20h10v2H34z" fill="#5cb8dc" /><path d="M148 4h5v3h-5zM148 10h5v3h-5z" fill="#e0a030" /><path d="M148 16h5v2h-5zM104 20h34v1h-34z" fill="#5cb8dc" />
          <path d="M91 0h3v24h-3zM155 0h3v24h-3z" fill="#444" />
        </svg>
      </div>
      <button aria-label="Show devices"><Icon n="discU" :w="28" /></button>
    </footer>
  </div>
</template>

<style>
html, body { background: #c9c6c9; }
</style>

<style scoped>
* { box-sizing: border-box; }
.app { min-height: 100vh; display: flex; flex-direction: column; background: #636363; color: #0d0d0d; font: 400 16px/18px Roboto, "Liberation Sans", sans-serif; border-radius: 0 0 14px 14px; overflow: hidden; }
button, input, select { font: inherit; color: inherit; margin: 0; padding: 0; border: 0; border-radius: 0; background: none; }
button { display: flex; align-items: center; justify-content: center; }
input { min-width: 0; text-align: center; }
select { appearance: none; display: block; width: 100%; height: 100%; padding: 0 13px 0 1px; }
b { font-weight: 500; }
.edge { height: 3px; background: #ece4ec; border-bottom: 1px solid #8f8b8f; }

.bar { height: 51px; display: flex; align-items: center; padding: 0 12px; }
.grp { display: flex; gap: 3px; align-items: center; }
.tb { height: 26px; background: #8a8a8a; }
.n25 { width: 25px; } .n31 { width: 31px; }
.pos { width: 122px; text-align: right; padding-right: 6px; }
.far { margin-left: 31px; }
.lit { background-color: #ffac2c; }
.space-l { flex: 37 1 0; } .space-r { flex: 60 1 0; }
.drop { position: relative; justify-content: flex-start; padding-left: 8px; }
.drop::after, .sel::after { content: ""; position: absolute; right: 4px; top: 50%; margin-top: -5px; border: 5px solid transparent; border-top: 9px solid #0a0a0a; border-bottom: 0; pointer-events: none; }
.drop::after, .flat::after { border-width: 6px 4px 0; margin-top: -3px; }
.trans { display: flex; gap: 14px; margin: 0 26px; align-items: center; }
.io { display: grid; gap: 2px; width: 12px; height: 26px; } .io i { background: #8a8a8a; }
.cpu { width: 54px; display: flex; align-items: center; justify-content: center; padding-left: 4px; background: linear-gradient(90deg, #ffac2c 15px, #8a8a8a 0); }

.sel { position: relative; display: block; height: 19px; background: #b9b9b9; border: 2px solid #505050; overflow: hidden; }
.sel select { line-height: 15px; }
.sel.flat { height: 26px; background: #8a8a8a; border: 0; }
.sel.flat select { padding-left: 7px; }
.ios .sel::after { right: 1px; }
.sel.dark { background: #7b7b7b; }
.sel.pre select { padding-left: 14px; }
.pi { position: absolute; left: 3px; top: 1px; pointer-events: none; }
.sel.none select { padding-left: 16px; }

.work { display: flex; }
.gutter { width: 47px; display: flex; flex-direction: column; justify-content: space-between; padding: 1px 0 0 12px; flex: none; }
.panel { flex: 1; min-width: 0; background: #424242; border-radius: 8px 8px 0 8px; padding: 6px 5px 0; overflow: hidden; }
.over { display: flex; align-items: center; height: 23px; }
.map { flex: 1; height: 23px; border: 3px solid #0a0a0a; background: #7f7f7f; margin-right: 8px; }
.map svg { width: 100%; height: 17px; display: block; }
.hw { width: 26px; height: 18px; background: #a3a3a3; }
.hw + .hw { margin: 0 4px 0 6px; }
.split { display: flex; }
.tl { flex: 1; min-width: 0; margin: 0 3px 0 1px; }
.ruler { height: 45px; display: flex; align-items: flex-end; overflow: hidden; padding-bottom: 2px; }
.ruler span { flex: 0 0 auto; height: 18px; padding-left: 7px; color: #111; white-space: nowrap; background: linear-gradient(#1d1d1d, #1d1d1d) 0 7px / 1px 9px no-repeat; }
.loopbar { height: 16px; background: #6d6d6d; border-bottom: 2px solid #424242; }
.brace { height: 14px; background: #a0a0a0; display: flex; justify-content: space-between; border-right: 2px solid #222; }
.canvas { position: relative; }
.marks { position: relative; height: 19px; background: #7a7a7a; }
.mark { position: absolute; top: 2px; display: flex; align-items: center; gap: 3px; height: 17px; line-height: 19px; white-space: nowrap; z-index: 2; background: #7a7a7a; padding-right: 3px; }
.scrub { position: relative; z-index: 2; height: 10px; background: #505050; border-bottom: 1px solid #3a3a3a; }
.flag { position: absolute; top: 3px; margin-left: -5px; }
.lane { position: relative; border-bottom: 3px solid #4e4e4e; background: repeating-linear-gradient(90deg, #727272 0 7.01754%, #7b7b7b 7.01754% 14.03509%); }
.lane.picked { background: repeating-linear-gradient(90deg, #939393 0 7.01754%, #999 7.01754% 14.03509%); }
.hair { position: absolute; left: 0; right: 0; height: 2px; background: rgba(0, 0, 0, .17); }
.ghost { position: absolute; background: rgba(0, 0, 0, .15); }
.clip { position: absolute; top: 0; bottom: 0; overflow: clip; border-right: 1px solid rgba(0, 0, 0, .4); }
.cap { position: relative; z-index: 2; height: 25px; line-height: 26px; padding-left: 3px; overflow: hidden; white-space: nowrap; background-image: linear-gradient(90deg, transparent calc(100% - 2px), rgba(0, 0, 0, .6) 0), linear-gradient(90deg, transparent calc(100% - 2px), rgba(0, 0, 0, .6) 0); background-repeat: repeat-x; background-position: 0 1px, 0 100%; }
.sc .clip { border: 0; }
.clip::before, .clip::after { content: ""; position: absolute; left: 0; right: 0; box-sizing: border-box; }
.kick::before, .kick::after { height: 14px; background: repeating-linear-gradient(90deg, #11232b 0 5px, #4e788b 5px 6px); }
.kick::before { top: 56px; } .kick::after { top: 134px; }
.bass::before, .bass::after { height: 75px; border-bottom: 5px solid #15100a; background: repeating-linear-gradient(90deg, #24170c 0 2px, transparent 2px 4px) 0 0 / 100% 4px no-repeat; }
.bass::before { top: 26px; } .bass::after { top: 113px; height: 58px; }
.hat::before { bottom: 0; height: 9px; background: repeating-linear-gradient(90deg, #11232b 0 5px, #52829a 5px 6px); }
.grid, .over-lines { position: absolute; left: 0; top: 0; width: 100%; height: 100%; pointer-events: none; }
.grid { z-index: 1; } .over-lines { z-index: 3; }
.grid path { stroke: rgba(0, 0, 0, .2); stroke-width: 1.5px; vector-effect: non-scaling-stroke; }
.over-lines path { vector-effect: non-scaling-stroke; }
.frac { position: absolute; right: 6px; bottom: 3px; z-index: 4; font: 700 24px/24px Roboto, sans-serif; color: #474747; }
.times { position: relative; display: flex; height: 23px; overflow: hidden; }
.times span { flex: 0 0 auto; border-left: 1px solid #1d1d1d; height: 12px; line-height: 22px; padding-left: 3px; color: #111; white-space: nowrap; background: linear-gradient(90deg, transparent calc(100% - 1px), #1d1d1d 0) 0 0 / 16.666% 3px repeat-x; }

.mix { width: 652px; flex: none; }
.tools { height: 90px; padding: 42px 0 0 5px; }
.set { width: 41px; height: 17px; border-radius: 9px; background: #a0a0a0; }
.tools-row { display: flex; gap: 9px; margin-top: 6px; }
.chip { width: 31px; height: 16px; } .blue { background: #66cfff; margin-left: 10px; } .red { background: #ff5640; }
.row { display: grid; grid-template-columns: 256px 110px 170px 107px; gap: 3px; background: #4e4e4e; border-bottom: 3px solid #4e4e4e; overflow: hidden; }
.row > * { min-height: 0; overflow: hidden; }
.row > .hd { display: flex; flex-direction: column; overflow: visible; }
.hd.track { padding-left: 7px; } .hd.group .body { margin-left: 7px; }
.title { position: relative; display: flex; align-items: center; height: 25px; flex: none; gap: 8px; padding-left: 5px; }
.title b { margin-bottom: 2px; }
.title.tall { height: 50px; align-items: flex-start; padding-top: 3px; }
.cursor { position: absolute; left: 110px; top: 5px; z-index: 5; }
.body { flex: 1; padding: 4px 4px 0; min-height: 0; overflow: hidden; }
.slot { display: block; height: 19px; border: 2px solid #505050; }
.body .slot { margin-top: 6px; border-color: rgba(20, 30, 40, .5); }
.lanebtn { margin: 8px 0 0 4px; }
.autos { margin: 5px -4px 0; padding: 2px 5px; border-top: 2px solid rgba(0, 0, 0, .17); line-height: 22px; }
.autos div { display: flex; justify-content: space-between; align-items: center; }
.cell { background: #7b7b7b; }
.picked .cell { background: #9a9a9a; }
.ios { display: flex; flex-direction: column; gap: 6px; padding: 3px 4px 0; }
.ios > * { flex: none; }
.mon { display: flex; justify-content: space-between; }
.b { height: 19px; background-color: #8f8f8f; border: 2px solid #505050; line-height: 15px; flex: none; }
.b.lit { background-color: #ffac2c; }
.mon .b { width: 25px; overflow: hidden; } .mon .b.lit { width: 40px; } .mon .b:last-child { width: 29px; }
.mx { position: relative; display: flex; flex-direction: column; gap: 6px; padding: 3px 0 0 5px; }
.ln { display: flex; gap: 6px; width: 141px; flex: none; }
.ln .w36 { margin-left: auto; overflow: hidden; }
.inf { gap: 5px; }
.w67 { width: 67px; } .w68 { width: 68px; } .w31 { width: 31px; } .w25 { width: 25px; } .w36 { width: 36px; } .w28 { width: 28px; }
.num { font-weight: 500; }
.v { height: 19px; background-color: #b9b9b9; border: 2px solid #505050; line-height: 15px; background-origin: padding-box; background-repeat: no-repeat; }
.inf .v { flex: 1 1 0; width: 0; }
.meter { position: absolute; right: 4px; top: 2px; bottom: 1px; display: flex; gap: 2px; }
.meter i { width: 5px; background: linear-gradient(#2a2a2a 16px, #6c6c6c 16px 18px, #2a2a2a 18px); }
.meter.dim i { background: linear-gradient(#333 2px, #6c6c6c 2px 4px, #333 4px 6px, #666 6px); }
.meter.live i { background: linear-gradient(#8a9a8a 4px, #53e05a 4px); }
.dl { display: flex; gap: 4px; padding: 3px 0 0 2px; align-items: flex-start; }
.dwrap { position: relative; width: 61px; height: 19px; } .dwrap .v { width: 100%; padding-right: 9px; }
.dwrap::after { content: ""; position: absolute; right: 2px; top: 3px; border: 7px solid transparent; border-right: 9px solid #8e8e8e; border-left: 0; }
.dwrap.neg::after { border-right-color: #66cfff; }
.dl .b { width: 36px; }

.rail { width: 35px; margin-right: 12px; flex: none; display: flex; flex-direction: column; }
.views { height: 69px; padding: 1px 0 0 7px; display: flex; flex-direction: column; gap: 6px; }
.track-rail { flex: 1; background: #424242; border-radius: 0 8px 8px 0; display: flex; flex-direction: column; justify-content: space-between; padding: 16px 10px 36px; }
.thumb { width: 10px; height: 105px; border-radius: 5px; background: #2f2f2f; }
.dots { display: flex; flex-direction: column; gap: 8px; margin-left: -5px; }
.dots button { width: 20px; height: 20px; border-radius: 50%; background: #f7a92f; font-size: 11px; font-weight: 500; line-height: 12px; color: #4b3312; }

.devices { display: flex; margin: 13px 12px 0 12px; background: #505050; border-radius: 6px 6px 0 6px; height: 290px; padding: 6px 4px 6px 0; overflow: hidden; }
.grip { width: 5px; margin: 110px 8px 0 9px; height: 60px; flex: none; background: radial-gradient(circle, #222 2px, transparent 2px) 0 0 / 5px 6px; }
.dev { display: flex; flex-direction: column; flex: none; background: #7b7b7b; border-radius: 6px; overflow: hidden; }
.dt { height: 25px; flex: none; background: #9b9b9b; display: flex; align-items: center; gap: 5px; padding: 0 5px; }
.dt b { margin-left: 1px; }
.grow { flex: 1; }
.simpler { width: 1064px; }
.tabs { display: flex; gap: 4px; margin-left: auto; align-items: flex-end; height: 25px; }
.tabs button { height: 22px; padding: 0 10px; background: #7b7b7b; border-radius: 5px 5px 0 0; }
.tabs button + button { height: 19px; margin-bottom: 3px; border-radius: 4px; padding: 0 7px; }
.screen { display: flex; background: #232323; margin: 3px 4px 0 5px; border-radius: 6px; height: 191px; overflow: hidden; color: #8a8a8a; flex: none; }
.modes { width: 62px; display: flex; flex-direction: column; border-right: 2px solid #8a8a8a; flex: none; }
.modes button { flex: 1; flex-direction: column; gap: 7px; border-top: 2px solid #8a8a8a; padding-top: 4px; }
.modes .cur { color: #ffac2c; border-top: 0; margin-right: -2px; background: #232323; }
.wave { flex: 1; min-width: 0; padding: 3px 5px 0 7px; }
.plot { position: relative; height: 137px; }
.plot svg { width: 100%; height: 137px; display: block; }
.wt { position: absolute; left: 0; right: 0; bottom: 6px; display: flex; }
.wt span { flex: 0 0 151px; padding-left: 5px; color: #6a6a6a; white-space: nowrap; }
.sp-row { display: flex; padding-left: 2px; margin-top: 5px; }
.spar { width: 67px; flex: none; display: flex; flex-direction: column; gap: 4px; white-space: nowrap; }
.spar span + span { padding-left: 2px; }
.cy { color: #66cfff; font-weight: 500; }
.ls { width: 56px; display: grid; gap: 5px; margin: 1px 15px 0 0; }
.ls button, .wbtn { height: 17px; border: 2px solid #66cfff; color: #66cfff; font: 14px/14px "DejaVu Sans Mono", monospace; }
.ls .fill, .retrig { background: #66cfff; color: #111; }
.voices { width: 61px; }
.dn { display: inline-block; margin: 0 0 2px 14px; border: 5px solid transparent; border-top: 6px solid #66cfff; border-bottom: 0; }
.dn.g { border-top-color: #8a8a8a; margin-left: 20px; }
.retrig { width: 16px; height: 16px; margin-left: 13px; font: 13px/14px "DejaVu Sans Mono", monospace; }
.warp { margin: 0 6px 0 auto; display: grid; grid-template-columns: 80px 28px 37px 37px; column-gap: 3px; row-gap: 4px; align-items: center; justify-items: center; }
.wbtn { width: 80px; border-color: #ffac2c; color: #ffac2c; }
.pill { height: 19px; width: 100%; border: 2px solid #4a4a4a; border-radius: 10px; }
.beat { grid-column: span 2; color: #ffac2c; font-weight: 500; }
.beats { grid-column: 1 / 3; justify-self: start; padding-left: 4px; }
.low { display: flex; flex: 1; padding-left: 8px; }
.low-a { width: 388px; display: flex; padding-top: 6px; border-right: 2px solid #636363; }
.ck { appearance: none; width: 19px; height: 19px; background: #939393; border: 2px solid #505050; flex: none; }
.ck:checked { background: #ffac2c; }
.low-a label { margin: 1px 5px 0 9px; }
.two { display: grid; gap: 8px; width: 58px; align-content: start; margin-right: 13px; }
.kn { width: 84px; margin-top: -4px; display: flex; flex-direction: column; gap: 4px; }
.low-b { width: 216px; padding: 8px 0 0 25px; border-right: 2px solid #636363; display: flex; flex-direction: column; gap: 6px; }
.lr { display: flex; align-items: center; }
.lr label { margin: 0 auto 0 6px; }
.low-b .lr { width: 161px; gap: 5px; } .low-b .lr label { margin-left: 1px; }
.wv { width: 64px; } .rate { width: 77px; margin-left: auto; background-image: linear-gradient(90deg, #66cfff 58%, transparent 0); }
.low-c { display: flex; padding: 2px 0 0 12px; }
.ek { width: 89px; display: flex; flex-direction: column; gap: 4px; }
.ek:last-child { width: 80px; }
.ek div { display: flex; align-items: flex-end; }
.ek em { font-style: normal; margin: 0 0 -7px -8px; white-space: nowrap; }

.vm { display: flex; gap: 2px; width: 17px; padding-left: 5px; flex: none; align-items: flex-start; margin-top: 109px; }
.vm i { width: 3px; height: 59px; background: linear-gradient(#242424 5px, #777 5px 7px, #242424 7px); }

.eq { width: 713px; background: #9b9b9b; }
.eqb { display: flex; gap: 3px; padding: 0 3px 3px; height: 253px; }
.eql, .eqr { background: #7b7b7b; border-radius: 6px; }
.eql { width: 71px; display: flex; flex-direction: column; justify-content: space-between; padding: 2px 0 4px; }
.kc { display: flex; flex-direction: column; align-items: center; height: 72px; white-space: nowrap; }
.kc svg { margin-bottom: -2px; }
.kc > span { height: 18px; }
.kc.gap { height: 81px; } .kc.gap svg { margin-top: 9px; }
.eqm { flex: 1; min-width: 0; display: flex; flex-direction: column; gap: 3px; }
.eqs { width: 100%; height: 198px; background: #232323; border-radius: 4px; display: block; }
.bands { display: grid; grid-template-columns: repeat(8, 1fr); gap: 3px; flex: 1; }
.band { background: #7b7b7b; border-radius: 6px; padding: 5px 6px 0; } .band.cur { background: none; }
.band.off .sel { background: #7b7b7b; }
.band label { display: flex; align-items: center; gap: 9px; padding: 4px 0 0 10px; }
.ck.sm { width: 16px; height: 16px; border-width: 1px; }
.band .ck:checked { background: #66cfff; }
.band .sel::after { right: 2px; border-width: 9px 5px 0; }
.eqr { width: 77px; padding: 9px 5px 0; display: flex; flex-direction: column; }
.eqr > * { flex: none; }
.eqr > span:not(.sel), .eqr > label { height: 22px; line-height: 24px; font-weight: 500; white-space: nowrap; }
.eqr .sel::after { right: 1px; }
.scale { background-image: linear-gradient(90deg, #66cfff 74%, transparent 0); }
.gain { background-image: linear-gradient(90deg, #66cfff 51%, transparent 0); }
.pair { display: flex; justify-content: space-between; } .pair .b { width: 30px; }
.dis { color: #4d4d4d; }

.af { width: 596px; }
.afb { display: flex; padding: 6px 5px 0; height: 246px; }
.col { display: flex; flex-direction: column; align-items: center; gap: 2px; }
.col b { height: 17px; line-height: 17px; }
.env { width: 76px; border-right: 2px solid #5c5c5c; }
.afm { width: 297px; margin-left: 8px; }
.afm > svg { display: block; background: #232323; border-radius: 6px; }
.fr { display: flex; justify-content: space-between; margin-top: 6px; }
.clean { width: 64px; background: #7b7b7b; margin: 0 2px; }
.pale { background-color: #c0c0c0; }
.qt { display: grid; grid-template-columns: 89px repeat(5, 1fr); gap: 5px 4px; margin-top: 12px; }
.fil { width: 86px; border-right: 2px solid #5c5c5c; }
.lfo { padding-left: 6px; flex: 1; display: flex; flex-direction: column; gap: 2px; }
.lfo > b { height: 17px; line-height: 17px; }
.lg { display: flex; } .lg .col { width: 60px; }
.side { width: 55px; }
.shape { display: flex; flex-direction: column; align-items: flex-end; height: 91px; gap: 4px; }
.shape .sel { width: 43px; } .shape .sel::after { right: 0; } .shape .pi { left: 1px; }
.opt { display: flex; height: 74px; } .opt > i { width: 16px; height: 2px; background: #5c5c5c; margin: 20px 8px 0 1px; }
.opt .b { width: 28px; margin-bottom: 4px; }
.dropzone { flex: 1; min-width: 0; background: #7b7b7b; overflow: hidden; }
.dropzone p { width: 136px; text-align: center; margin: 105px 0 0; line-height: 22px; }

.foot { display: flex; align-items: center; padding: 0 12px; height: 57px; }
.fbox { height: 32px; border: 4px solid #505050; background: #7b7b7b; border-radius: 5px; }
.one { flex: 1818 1 0; margin-left: 12px; }
.two2 { flex: 296 1 0; margin: 0 12px 0 14px; }
.sel-dev { align-self: flex-start; width: 300px; height: 44px; background: #505050; border-radius: 0 0 6px 6px; display: flex; align-items: flex-start; padding: 13px 10px 0 7px; gap: 8px; margin-right: 12px; }
.sel-dev span { line-height: 32px; }
.sel-dev svg { flex: 1; min-width: 0; height: 30px; border: 3px solid #050505; }
</style>
